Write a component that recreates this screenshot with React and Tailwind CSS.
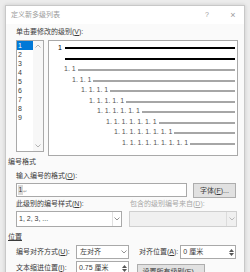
const Chevron = ({ up = false, className = "" }) => (
  <svg width="6" height="4" viewBox="0 0 6 4" className={className}>
    <path
      d={up ? "M0.5 3.5L3 1L5.5 3.5" : "M0.5 0.5L3 3L5.5 0.5"}
      fill="none"
      stroke="currentColor"
      strokeWidth="0.8"
    />
  </svg>
);

const Spinner = () => (
  <div className="w-[8px] h-full flex flex-col items-center justify-center gap-[1px] text-[#555]">
    <svg width="5" height="3" viewBox="0 0 5 3">
      <path d="M0 3L2.5 0L5 3Z" fill="currentColor" />
    </svg>
    <svg width="5" height="3" viewBox="0 0 5 3">
      <path d="M0 0L2.5 3L5 0Z" fill="currentColor" />
    </svg>
  </div>
);

const Key = ({ text, k, tail = ":" }) => (
  <span>
    {text}(<span className="underline">{k}</span>){tail}
  </span>
);

const levels = [
  { label: "1. 1", pl: "pl-[15px]" },
  { label: "1. 1. 1", pl: "pl-[23px]" },
  { label: "1. 1. 1. 1", pl: "pl-[32px]" },
  { label: "1. 1. 1. 1. 1", pl: "pl-[40px]" },
  { label: "1. 1. 1. 1. 1. 1", pl: "pl-[48px]" },
  { label: "1. 1. 1. 1. 1. 1. 1", pl: "pl-[57px]" },
  { label: "1. 1. 1. 1. 1. 1. 1. 1", pl: "pl-[65px]" },
  { label: "1. 1. 1. 1. 1. 1. 1. 1. 1", pl: "pl-[73px]" },
];

const App = () => {
  return (
    <div className="w-[250px] h-[272px] overflow-hidden whitespace-nowrap bg-[#ececec] pt-[5px] pl-[5px] text-[7px] leading-[10px] text-[#3a3a3a] font-['Liberation_Sans','Noto_Sans_CJK_SC',sans-serif]">
      <div className="w-[240px] h-[300px] bg-[#fafafa] border border-[#c8c8c8] shadow-[0_0_4px_rgba(0,0,0,0.15)]">
        {/* title bar */}
        <div className="h-[18px] bg-white flex items-center pl-[5px] pr-[5px] text-[#9a9a9a]">
          <span>定义新多级列表</span>
          <span className="ml-auto w-[10px] text-center">?</span>
          <span className="ml-[15px] w-[12px] text-center text-[9px]">×</span>
        </div>

        <div className="pl-[2px]">
          <div className="ml-[8px] mt-[3px] h-[10px]">
            <Key text="单击要修改的级别" k="V" />
          </div>

          {/* level list + preview */}
          <div className="ml-[8px] mt-[3px] flex gap-[4px] items-start">
            <div className="w-[28px] h-[112px] border border-[#a9a9a9] bg-white flex">
              <div className="w-[16px] flex flex-col">
                {[1, 2, 3, 4, 5, 6, 7, 8, 9].map((n) => (
                  <div
                    key={n}
                    className={
                      n === 1
                        ? "h-[9px] leading-[9px] pl-[1px] bg-[#0078d7] text-white"
                        : "h-[9px] leading-[9px] pl-[1px]"
                    }
                  >
                    {n}
                  </div>
                ))}
              </div>
              <div className="w-[10px] bg-[#f7f7f7] flex flex-col items-center justify-between py-[3px] text-[#a0a0a0]">
                <Chevron up />
                <Chevron />
              </div>
            </div>

            <div className="w-[190px] h-[116px] border border-[#a9a9a9] bg-white pt-[2px] pr-[2px]">
              <div className="h-[10.5px] flex items-center">
                <span className="ml-[9px] text-black">1</span>
                <div className="ml-[3px] flex-1 h-[2px] bg-black" />
              </div>
              <div className="h-[10.5px] flex items-center pl-[16px]">
                <div className="flex-1 h-[2px] bg-black" />
              </div>
              {levels.map((lv) => (
                <div key={lv.label} className={"h-[10.5px] flex items-center " + lv.pl}>
                  <span className="text-[#555] whitespace-pre">{lv.label}</span>
                  <div className="ml-[2px] mt-[2px] flex-1 h-[2px] bg-[#a6a6a6]" />
                </div>
              ))}
            </div>
          </div>

          {/* number format */}
          <div className="mt-[1px] h-[10px]">编号格式</div>
          <div className="ml-[8px] mt-[4px] h-[10px]">
            <Key text="输入编号的格式" k="O" />
          </div>
          <div className="ml-[8px] mt-[2px] flex items-start">
            <div className="w-[171px] h-[14px] border border-[#a9a9a9] bg-white flex items-center pl-[1px]">
              <span className="bg-[#d9d9d9] px-[0.5px]">1</span>
              <span className="text-[#999] text-[5px] leading-[6px] mt-[2px]">↵</span>
            </div>
            <div className="ml-[6px] w-[43px] h-[15px] bg-[#e1e1e1] border border-[#adadad] flex items-center justify-center">
              <Key text="字体" k="F" tail="..." />
            </div>
          </div>

          <div className="ml-[8px] mt-[1px] h-[10px] flex">
            <div className="w-[114px]">
              <Key text="此级别的编号样式" k="N" />
            </div>
            <div className="text-[#a8a8a8]">
              <Key text="包含的级别编号来自" k="D" />
            </div>
          </div>
          <div className="ml-[8px] mt-[2px] flex">
            <div className="w-[106px] h-[16px] border border-[#a9a9a9] bg-white flex items-center">
              <span className="pl-[2px] flex-1">1, 2, 3, ...</span>
              <div className="w-[9px] h-full border-l border-[#e0e0e0] flex items-center justify-center text-[#777]">
                <Chevron />
              </div>
            </div>
            <div className="ml-[7px] w-[108px] h-[16px] border border-[#cfcfcf] bg-[#f0f0f0] flex items-center justify-end">
              <div className="w-[10px] h-full border-l border-[#dcdcdc] flex items-center justify-center text-[#aaa]">
                <Chevron />
              </div>
            </div>
          </div>

          {/* position */}
          <div className="mt-[5px] h-[10px]">
            <span className="underline">位置</span>
          </div>
          <div className="ml-[8px] mt-[3px] h-[14px] flex items-center">
            <div className="w-[60px]">
              <Key text="编号对齐方式" k="U" />
            </div>
            <div className="w-[53px] h-[14px] border border-[#a9a9a9] bg-white flex items-center">
              <span className="pl-[3px] flex-1">左对齐</span>
              <div className="w-[8px] h-full flex items-center justify-center text-[#777]">
                <Chevron />
              </div>
            </div>
            <div className="ml-[10px]">
              <Key text="对齐位置" k="A" />
            </div>
            <div className="ml-[2px] w-[56px] h-[14px] border border-[#a9a9a9] bg-white flex items-center">
              <span className="pl-[2px] flex-1">0 厘米</span>
              <Spinner />
            </div>
          </div>
          <div className="ml-[8px] mt-[2px] h-[16px] flex items-start">
            <div className="w-[60px] h-[14px] flex items-center">
              <Key text="文本缩进位置" k="I" />
            </div>
            <div className="w-[53px] h-[14px] border border-[#a9a9a9] bg-white flex items-center">
              <span className="pl-[2px] flex-1">0.75 厘米</span>
              <Spinner />
            </div>
            <div className="ml-[8px] mt-[3px] w-[68px] h-[15px] bg-[#e1e1e1] border border-[#adadad] flex items-center justify-center">
              <Key text="设置所有级别" k="E" tail="..." />
            </div>
          </div>
        </div>
      </div>
    </div>
  );
};

export default App;
